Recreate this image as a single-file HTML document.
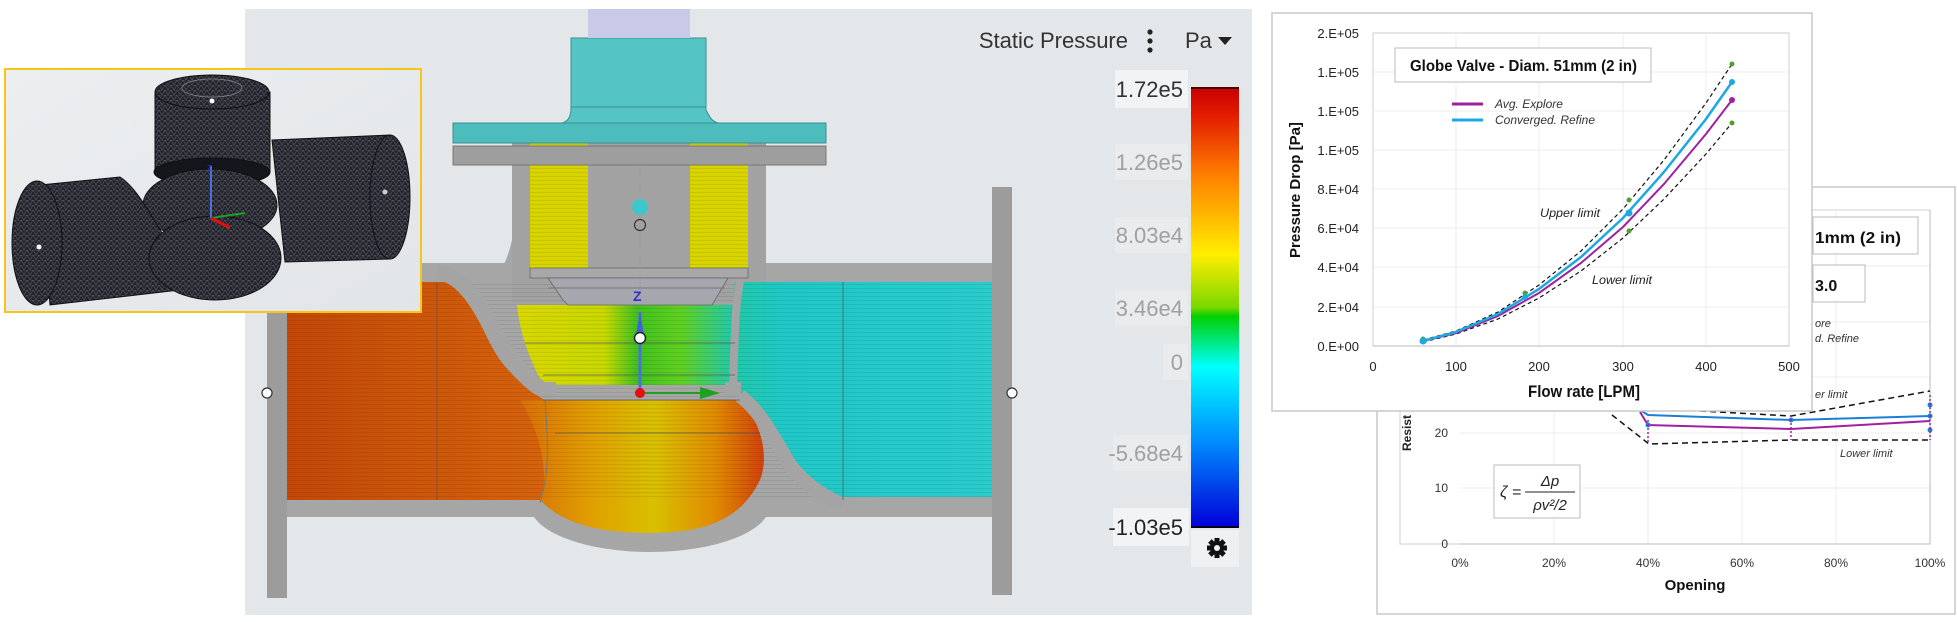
<!DOCTYPE html>
<html><head><meta charset="utf-8"><style>
html,body{margin:0;padding:0;background:#fff;width:1957px;height:622px;overflow:hidden}
svg{position:absolute;left:0;top:0}
text{font-family:"Liberation Sans",sans-serif}
.n{font-family:"Liberation Sans Narrow","Liberation Sans",sans-serif}
</style></head><body>
<svg width="1957" height="622" viewBox="0 0 1957 622" xmlns="http://www.w3.org/2000/svg">
<defs>
<linearGradient id="bar" x1="0" y1="0" x2="0" y2="1">
<stop offset="0" stop-color="#c80000"/><stop offset="0.06" stop-color="#e21a00"/>
<stop offset="0.2" stop-color="#ff8000"/><stop offset="0.38" stop-color="#ffee00"/>
<stop offset="0.5" stop-color="#7ad800"/><stop offset="0.52" stop-color="#00d000"/>
<stop offset="0.635" stop-color="#00ffff"/><stop offset="0.8" stop-color="#0090ff"/>
<stop offset="1" stop-color="#0000d8"/></linearGradient>
<linearGradient id="orL" x1="0" y1="0" x2="1" y2="0">
<stop offset="0" stop-color="#c34808"/><stop offset="1" stop-color="#d5620c"/></linearGradient>
<linearGradient id="low" x1="0" y1="0" x2="1" y2="0">
<stop offset="0" stop-color="#d86d0a"/><stop offset="0.3" stop-color="#e0a000"/>
<stop offset="0.55" stop-color="#d8c000"/><stop offset="0.8" stop-color="#e08a00"/><stop offset="1" stop-color="#d0400c"/></linearGradient>
<linearGradient id="up" x1="0" y1="0" x2="1" y2="0">
<stop offset="0" stop-color="#d8d800"/><stop offset="0.4" stop-color="#c8d800"/>
<stop offset="0.55" stop-color="#40c020"/><stop offset="0.75" stop-color="#60d020"/><stop offset="1" stop-color="#20c8b0"/></linearGradient>
<linearGradient id="cy" x1="0" y1="0" x2="1" y2="0">
<stop offset="0" stop-color="#20c8a8"/><stop offset="0.2" stop-color="#20c8c8"/><stop offset="1" stop-color="#2acccc"/></linearGradient>
<pattern id="lines" width="6" height="4" patternUnits="userSpaceOnUse"><rect width="6" height="1" fill="rgba(0,0,0,0.08)"/></pattern>
<pattern id="mesh" width="6" height="5" patternUnits="userSpaceOnUse"><rect width="6" height="5" fill="#22232b"/><path d="M0 5L3 0L6 5M0 0H6" stroke="#5a5c68" stroke-width="0.6" fill="none"/></pattern>
<linearGradient id="inbg" x1="0" y1="0" x2="1" y2="1"><stop offset="0" stop-color="#eceef0"/><stop offset="1" stop-color="#e2e5e8"/></linearGradient>
</defs>

<rect x="245" y="9" width="1007" height="606" fill="#e4e7e9"/>

<rect x="267" y="250" width="20" height="348" fill="#9c9c9c"/>
<rect x="992" y="187" width="20" height="408" fill="#9c9c9c"/>
<rect x="287" y="263" width="705" height="254" fill="#a6a6a6"/>
<ellipse cx="650" cy="505" rx="120" ry="47" fill="#a6a6a6"/>
<rect x="512" y="143" width="254" height="160" fill="#a2a2a2"/>
<path d="M512 240 C505 270 495 285 480 263 L512 263Z" fill="#a6a6a6"/>
<path d="M287 282 L450 282 C470 290 480 330 500 360 C515 380 535 395 545 400 L545 483 L540 500 L287 500Z" fill="url(#orL)"/>
<path d="M520 400 L740 400 C760 420 770 455 760 480 C745 510 720 533 650 533 C580 533 555 515 540 500 C548 480 545 440 520 400Z" fill="url(#low)"/>
<path d="M517 305 L735 305 L733 385 L543 385 C530 360 520 335 517 305Z" fill="url(#up)"/>
<path d="M735 282 L992 282 L992 497 L843 497 C810 485 790 460 770 430 C755 410 745 400 737 393 L733 300Z" fill="url(#cy)"/>
<rect x="287" y="282" width="705" height="218" fill="url(#lines)"/>
<path d="M437 272 C470 275 485 320 505 350 C520 372 530 382 540 388" fill="none" stroke="#a4a4a4" stroke-width="16"/>
<path d="M744 268 C735 290 735 330 733 388" fill="none" stroke="#a4a4a4" stroke-width="8"/>
<path d="M740 396 C760 410 775 440 790 465 C805 485 825 497 843 505" fill="none" stroke="#a4a4a4" stroke-width="14"/>
<path d="M545 400 C548 440 550 470 540 503" fill="none" stroke="#777" stroke-width="1"/>
<rect x="540" y="382" width="16" height="14" fill="#a4a4a4"/>
<rect x="725" y="382" width="16" height="14" fill="#a4a4a4"/>
<g stroke="#555" stroke-width="1" fill="none" opacity="0.7">
<line x1="525" y1="343" x2="735" y2="343"/><line x1="543" y1="375" x2="735" y2="375"/><line x1="543" y1="400" x2="740" y2="400"/><line x1="555" y1="433" x2="760" y2="433"/>
<line x1="437" y1="282" x2="437" y2="500"/><line x1="843" y1="282" x2="843" y2="500"/></g>
<rect x="530" y="143" width="58" height="125" fill="#d8d400"/>
<rect x="690" y="143" width="58" height="125" fill="#d8d400"/>
<rect x="530" y="143" width="58" height="125" fill="url(#lines)"/>
<rect x="690" y="143" width="58" height="125" fill="url(#lines)"/>
<rect x="530" y="268" width="218" height="10" fill="#a8a8a8" stroke="#666" stroke-width="0.8"/>
<path d="M548 278 L728 278 L715 300 L712 305 L568 305 L563 300Z" fill="#a6a6ae" stroke="#666" stroke-width="0.8"/>
<line x1="548" y1="288" x2="725" y2="288" stroke="#777"/>
<rect x="453" y="146" width="373" height="19" fill="#9e9e9e" stroke="#777" stroke-width="1"/>
<rect x="453" y="123" width="373" height="20" fill="#4cbcbc" stroke="#3a8f8f" stroke-width="1"/>
<path d="M571 38 L706 38 L706 110 C710 118 712 121 718 123 L562 123 C568 121 570 118 571 110Z" fill="#55c4c4" stroke="#3a8f8f" stroke-width="1"/>
<line x1="571" y1="107" x2="706" y2="107" stroke="#3a8f8f"/>
<rect x="588" y="9" width="102" height="29" fill="#c9c9e8"/>
<line x1="640" y1="160" x2="640" y2="300" stroke="#888" stroke-dasharray="1 2" stroke-width="0.6"/>
<circle cx="640" cy="207" r="8" fill="#3cc8c8"/>
<circle cx="640" cy="225" r="5.5" fill="none" stroke="#333" stroke-width="1.2"/>
<text x="633" y="301" font-size="14" font-weight="bold" fill="#3030c0">Z</text>
<line x1="640" y1="312" x2="640" y2="392" stroke="#4a70e0" stroke-width="3"/>
<path d="M636 335 L640 312 L644 335Z" fill="#4060e0"/>
<line x1="640" y1="393" x2="710" y2="393" stroke="#20a020" stroke-width="2"/>
<path d="M700 387 L720 393 L700 399Z" fill="#20a020"/>
<circle cx="640" cy="338" r="5.5" fill="#fff" stroke="#222" stroke-width="1.5"/>
<circle cx="640" cy="393" r="5" fill="#e01010"/>
<circle cx="267" cy="393" r="5" fill="#fff" stroke="#333" stroke-width="1.2"/>
<circle cx="1012" cy="393" r="5" fill="#fff" stroke="#333" stroke-width="1.2"/>

<text x="1128" y="48" font-size="22" fill="#333" text-anchor="end">Static Pressure</text>
<circle cx="1150" cy="32" r="2.6" fill="#222"/><circle cx="1150" cy="41" r="2.6" fill="#222"/><circle cx="1150" cy="50" r="2.6" fill="#222"/>
<text x="1185" y="48" font-size="22" fill="#333">Pa</text>
<path d="M1218 37 L1232 37 L1225 45Z" fill="#222"/>
<rect x="1191" y="88" width="48" height="439" fill="url(#bar)"/>
<rect x="1191" y="87" width="48" height="2" fill="#400"/>
<rect x="1191" y="526" width="48" height="2" fill="#002"/>
<g font-size="22" text-anchor="end">
<rect x="1115" y="70" width="73" height="38" fill="#f2f3f4"/><text x="1183" y="97" fill="#333">1.72e5</text>
<rect x="1115" y="144" width="73" height="36" fill="#e9ebec"/><text x="1183" y="170" fill="#a0a0a0">1.26e5</text>
<rect x="1115" y="217" width="73" height="36" fill="#e9ebec"/><text x="1183" y="243" fill="#a0a0a0">8.03e4</text>
<rect x="1115" y="290" width="73" height="36" fill="#e9ebec"/><text x="1183" y="316" fill="#a0a0a0">3.46e4</text>
<rect x="1163" y="344" width="25" height="36" fill="#e9ebec"/><text x="1183" y="370" fill="#a0a0a0">0</text>
<rect x="1113" y="435" width="75" height="36" fill="#e9ebec"/><text x="1183" y="461" fill="#a0a0a0">-5.68e4</text>
<rect x="1113" y="508" width="76" height="38" fill="#f2f3f4"/><text x="1183" y="535" fill="#222">-1.03e5</text>
</g>
<rect x="1191" y="530" width="48" height="37" fill="#eef0f1"/>
<g transform="translate(1217 548)" fill="#111">
<circle r="7"/><g><rect x="-2.5" y="-10" width="5" height="20"/><rect x="-2.5" y="-10" width="5" height="20" transform="rotate(45)"/><rect x="-2.5" y="-10" width="5" height="20" transform="rotate(90)"/><rect x="-2.5" y="-10" width="5" height="20" transform="rotate(135)"/></g>
<circle r="3" fill="#eef0f1"/></g>

<rect x="5" y="69" width="416" height="243" fill="url(#inbg)" stroke="#f5c518" stroke-width="2"/>
<g stroke="#111" stroke-width="1">
<path d="M272 140 L390 135 L390 259 L285 262 Z" fill="url(#mesh)"/>
<ellipse cx="390" cy="197" rx="20" ry="62" fill="url(#mesh)"/>
<path d="M155 92 L270 92 L270 172 L155 172Z" fill="url(#mesh)"/>
<ellipse cx="212" cy="172" rx="58" ry="14" fill="#15161c"/>
<ellipse cx="212" cy="92" rx="57" ry="17" fill="url(#mesh)"/>
<ellipse cx="212" cy="88" rx="30" ry="9" fill="none" stroke="#888" stroke-width="0.8"/>
<ellipse cx="210" cy="205" rx="67" ry="36" fill="url(#mesh)"/>
<path d="M40 185 L120 177 C140 190 155 225 170 245 L180 290 L50 305Z" fill="url(#mesh)"/>
<ellipse cx="215" cy="258" rx="66" ry="42" fill="url(#mesh)"/>
<ellipse cx="37" cy="243" rx="25" ry="62" fill="url(#mesh)"/>
</g>
<circle cx="212" cy="101" r="2.5" fill="#fff"/>
<circle cx="39" cy="247" r="2.5" fill="#fff"/>
<circle cx="385" cy="192" r="2.5" fill="#ccc"/>
<line x1="211" y1="166" x2="211" y2="218" stroke="#4a70e0" stroke-width="2"/>
<text x="207" y="171" font-size="8" fill="#3040d0">Z</text>
<line x1="211" y1="218" x2="245" y2="213" stroke="#20a020" stroke-width="2"/>
<line x1="211" y1="218" x2="230" y2="228" stroke="#e01010" stroke-width="3"/>

<rect x="1377" y="187" width="578" height="427" fill="#fff" stroke="#c8c8c8" stroke-width="1.5"/>
<rect x="1400" y="210" width="530" height="334" fill="none" stroke="#d0d0d0"/>
<g stroke="#ececec"><line x1="1460" y1="488" x2="1930" y2="488"/><line x1="1460" y1="433" x2="1930" y2="433"/><line x1="1460" y1="377" x2="1930" y2="377"/><line x1="1460" y1="322" x2="1930" y2="322"/><line x1="1460" y1="266" x2="1930" y2="266"/>
<line x1="1554" y1="210" x2="1554" y2="544"/><line x1="1648" y1="210" x2="1648" y2="544"/><line x1="1742" y1="210" x2="1742" y2="544"/><line x1="1836" y1="210" x2="1836" y2="544"/></g>
<line x1="1460" y1="544" x2="1930" y2="544" stroke="#bbb"/><line x1="1930" y1="210" x2="1930" y2="544" stroke="#bbb"/>
<rect x="1813" y="217" width="105" height="37" fill="#fff" stroke="#bbb"/>
<text x="1815" y="243" font-size="16" font-weight="bold" class="n" fill="#111" textLength="86" lengthAdjust="spacingAndGlyphs">1mm (2 in)</text>
<rect x="1813" y="265" width="52" height="37" fill="#fff" stroke="#bbb"/>
<text x="1815" y="291" font-size="16" font-weight="bold" class="n" fill="#111">3.0</text>
<text x="1815" y="327" font-size="11" font-style="italic" fill="#333" class="n">ore</text>
<text x="1815" y="342" font-size="11" font-style="italic" fill="#333" class="n">d. Refine</text>
<text x="1815" y="398" font-size="11" font-style="italic" fill="#333" class="n">er limit</text>
<text x="1840" y="457" font-size="11" font-style="italic" fill="#333" class="n">Lower limit</text>
<path d="M1612 415 L1649 444 L1791 440 L1930 440" fill="none" stroke="#111" stroke-width="1.5" stroke-dasharray="6 4"/>
<path d="M1700 411 L1791 416 L1930 391" fill="none" stroke="#111" stroke-width="1.5" stroke-dasharray="6 4"/>
<path d="M1640 410 L1648 415 L1791 420 L1930 416" fill="none" stroke="#1a7fd8" stroke-width="2"/>
<path d="M1640 412 L1648 425 L1791 429 L1930 421" fill="none" stroke="#a020a0" stroke-width="2"/>
<g fill="#1a7fd8"><circle cx="1648" cy="425" r="2.5"/><circle cx="1791" cy="420" r="2.5"/><circle cx="1930" cy="416" r="2.5"/><circle cx="1930" cy="405" r="2.5"/><circle cx="1930" cy="430" r="2.5"/></g>
<g stroke="#a020a0" stroke-dasharray="2 2" stroke-width="1.5"><line x1="1648" y1="420" x2="1648" y2="444"/><line x1="1791" y1="415" x2="1791" y2="440"/><line x1="1930" y1="395" x2="1930" y2="440"/></g>
<text x="1411" y="433" font-size="12" font-weight="bold" fill="#222" transform="rotate(-90 1411 433)" text-anchor="middle">Resist</text>
<g font-size="12" class="n" fill="#333" text-anchor="end"><text x="1448" y="437">20</text><text x="1448" y="492">10</text><text x="1448" y="548">0</text></g>
<g font-size="12" class="n" fill="#333" text-anchor="middle"><text x="1460" y="567">0%</text><text x="1554" y="567">20%</text><text x="1648" y="567">40%</text><text x="1742" y="567">60%</text><text x="1836" y="567">80%</text><text x="1930" y="567">100%</text></g>
<text x="1695" y="590" font-size="15" font-weight="bold" class="n" text-anchor="middle" fill="#111">Opening</text>
<rect x="1494" y="465" width="86" height="53" fill="#fff" stroke="#bbb"/>
<text x="1500" y="497" font-size="16" font-style="italic" font-family="Liberation Serif" fill="#222">ζ =</text>
<line x1="1525" y1="492" x2="1575" y2="492" stroke="#222"/>
<text x="1550" y="486" font-size="15" font-style="italic" font-family="Liberation Serif" text-anchor="middle" fill="#222">Δp</text>
<text x="1550" y="510" font-size="15" font-style="italic" font-family="Liberation Serif" text-anchor="middle" fill="#222">ρv²/2</text>

<rect x="1272" y="13" width="540" height="398" fill="#fff" stroke="#c8c8c8" stroke-width="1.5"/>
<rect x="1373" y="33" width="416" height="313" fill="none" stroke="#ccc"/>
<g stroke="#ececec">
<line x1="1373" y1="72" x2="1789" y2="72"/><line x1="1373" y1="111" x2="1789" y2="111"/><line x1="1373" y1="150" x2="1789" y2="150"/><line x1="1373" y1="189" x2="1789" y2="189"/><line x1="1373" y1="228" x2="1789" y2="228"/><line x1="1373" y1="267" x2="1789" y2="267"/><line x1="1373" y1="307" x2="1789" y2="307"/>
<line x1="1456" y1="33" x2="1456" y2="346"/><line x1="1539" y1="33" x2="1539" y2="346"/><line x1="1623" y1="33" x2="1623" y2="346"/><line x1="1706" y1="33" x2="1706" y2="346"/></g>
<line x1="1373" y1="346" x2="1789" y2="346" stroke="#bbb"/>
<g font-size="13" class="n" fill="#222" text-anchor="end">
<text x="1359" y="38">2.E+05</text><text x="1359" y="77">1.E+05</text><text x="1359" y="116">1.E+05</text><text x="1359" y="155">1.E+05</text><text x="1359" y="194">8.E+04</text><text x="1359" y="233">6.E+04</text><text x="1359" y="272">4.E+04</text><text x="1359" y="312">2.E+04</text><text x="1359" y="351">0.E+00</text></g>
<g font-size="13" class="n" fill="#222" text-anchor="middle">
<text x="1373" y="371">0</text><text x="1456" y="371">100</text><text x="1539" y="371">200</text><text x="1623" y="371">300</text><text x="1706" y="371">400</text><text x="1789" y="371">500</text></g>
<text x="1528" y="397" font-size="17" font-weight="bold" class="n" fill="#111" textLength="112" lengthAdjust="spacingAndGlyphs">Flow rate  [LPM]</text>
<text x="1300" y="190" font-size="15" font-weight="bold" fill="#111" transform="rotate(-90 1300 190)" text-anchor="middle">Pressure Drop  [Pa]</text>
<rect x="1395" y="48" width="256" height="34" fill="#fff" stroke="#bbb"/>
<text x="1410" y="71" font-size="16" font-weight="bold" class="n" fill="#111" textLength="227" lengthAdjust="spacingAndGlyphs">Globe Valve - Diam. 51mm (2 in)</text>
<line x1="1452" y1="104" x2="1483" y2="104" stroke="#a020a0" stroke-width="3"/>
<line x1="1452" y1="120" x2="1483" y2="120" stroke="#1ca8e0" stroke-width="3"/>
<text x="1495" y="108" font-size="12" font-style="italic" class="n" fill="#333" textLength="68" lengthAdjust="spacingAndGlyphs">Avg. Explore</text>
<text x="1495" y="124" font-size="12" font-style="italic" class="n" fill="#333" textLength="100" lengthAdjust="spacingAndGlyphs">Converged. Refine</text>
<text x="1540" y="217" font-size="12" font-style="italic" class="n" fill="#222" textLength="60" lengthAdjust="spacingAndGlyphs">Upper limit</text>
<text x="1592" y="284" font-size="12" font-style="italic" class="n" fill="#222" textLength="60" lengthAdjust="spacingAndGlyphs">Lower limit</text>
<polyline points="1423,340 1456,331 1498,312 1539,285 1581,251 1623,209 1664,160 1706,103 1732,64" fill="none" stroke="#111" stroke-width="1.2" stroke-dasharray="4 3"/>
<polyline points="1423,342 1456,334 1498,319 1539,298 1581,271 1623,238 1664,199 1706,154 1732,123" fill="none" stroke="#111" stroke-width="1.2" stroke-dasharray="4 3"/>
<polyline points="1423,341 1456,333 1498,316 1539,293 1581,263 1623,227 1664,184 1706,134 1732,100" fill="none" stroke="#a020a0" stroke-width="2"/>
<polyline points="1423,341 1456,332 1498,314 1539,289 1581,257 1623,218 1664,172 1706,119 1732,82" fill="none" stroke="#1ca8e0" stroke-width="2.5"/>
<g fill="#50a030"><circle cx="1732" cy="64" r="2.5"/><circle cx="1732" cy="123" r="2.5"/><circle cx="1629" cy="200" r="2.5"/><circle cx="1629" cy="231" r="2.5"/><circle cx="1525" cy="293" r="2.5"/><circle cx="1423" cy="339" r="2.5"/></g>
<g fill="#1ca8e0"><circle cx="1732" cy="82" r="3"/><circle cx="1629" cy="213" r="3.5"/><circle cx="1525" cy="297" r="3"/><circle cx="1423" cy="341" r="3.5"/></g>
<circle cx="1732" cy="100" r="3" fill="#a020a0"/>
</svg>
</body></html>
